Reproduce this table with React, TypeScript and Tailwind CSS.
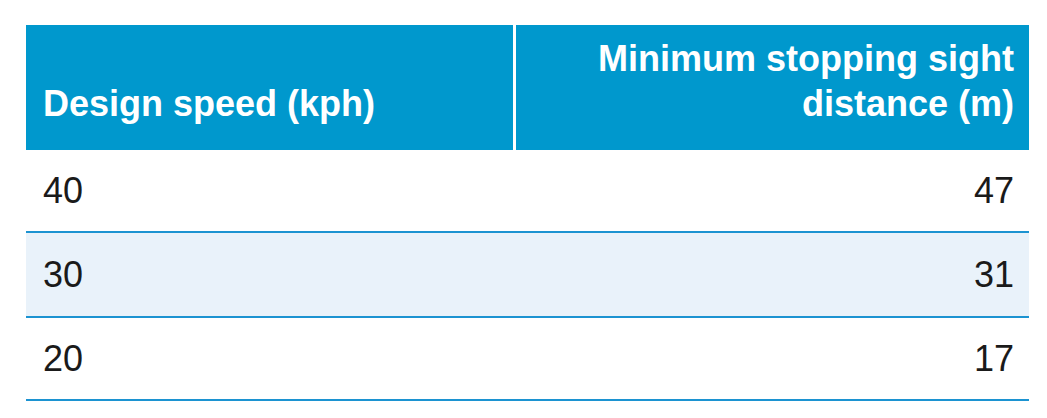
import React from 'react';

const rows = [
  { speed: '40', distance: '47', shaded: false },
  { speed: '30', distance: '31', shaded: true },
  { speed: '20', distance: '17', shaded: false },
];

const App: React.FC = () => {
  return (
    <div className="w-[1047px] h-[418px] bg-white pt-[25px] pl-[26px]" style={{ fontFamily: '"Liberation Sans", Arial, sans-serif' }}>
      <div className="w-[1003px]">
        <div className="flex h-[125px] bg-[#0098cd] text-white font-bold text-[36px] leading-[45px]">
          <div className="w-[490px] flex items-end pl-[17px] pb-[24px] border-r-[3px] border-white">
            Design speed (kph)
          </div>
          <div className="flex-1 flex items-end justify-end text-right pr-[15px] pb-[24px]">
            Minimum stopping sight
            <br />
            distance (m)
          </div>
        </div>

        {rows.map((r, i) => (
          <div
            key={i}
            className={`flex items-center justify-between border-b-2 border-[#1c93d1] pl-[17px] pr-[15px] text-[36px] text-[#1a1a1a] ${
              r.shaded ? 'bg-[#e9f2fa] h-[85px]' : 'bg-white h-[83px]'
            }`}
          >
            <span>{r.speed}</span>
            <span>{r.distance}</span>
          </div>
        ))}
      </div>
    </div>
  );
};

export default App;
